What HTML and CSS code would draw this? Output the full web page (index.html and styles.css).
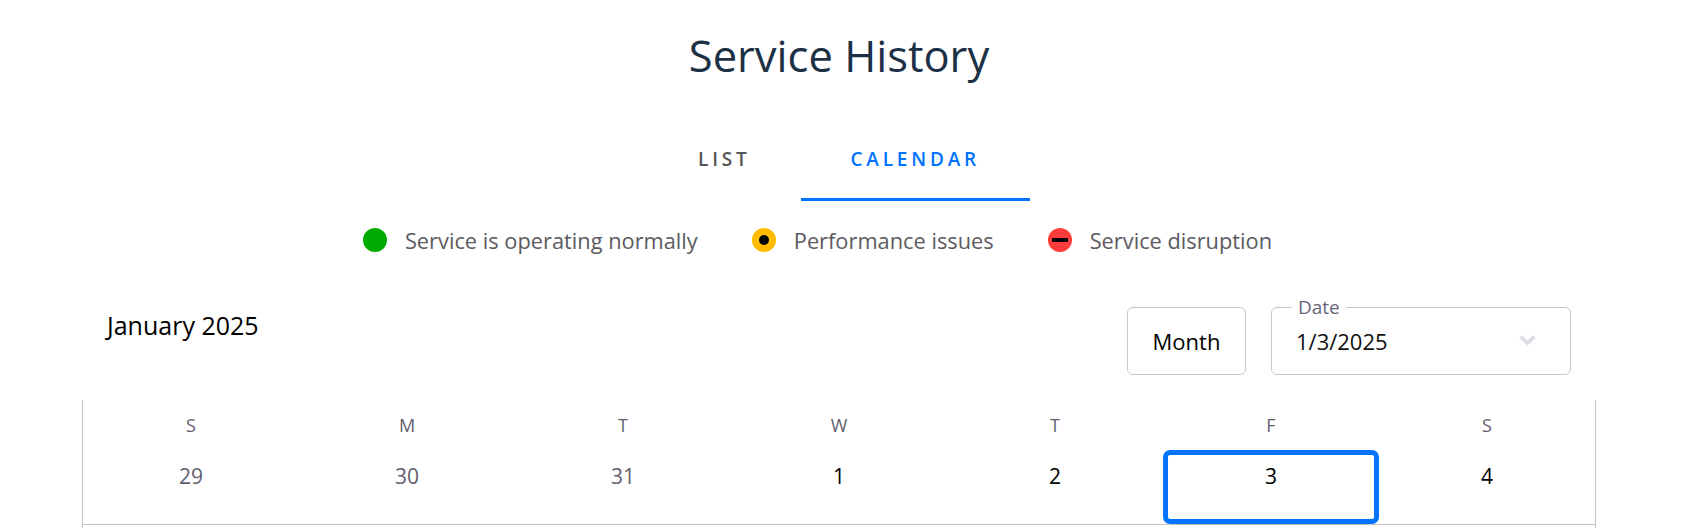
FILE: index.html
```html
<!DOCTYPE html>
<html lang="en">
<head>
    <meta charset="UTF-8">
    <meta name="viewport" content="width=device-width, initial-scale=1.0">
    <title>Service History</title>
    <link rel="stylesheet" href="styles.css">
</head>
<body>
    <div class="page">
        <h1 class="page-title">Service History</h1>

        <!-- Tabs -->
        <div class="tabs">
            <a href="#" class="tab">LIST</a>
            <a href="#" class="tab tab-active">CALENDAR</a>
        </div>

        <!-- Legend -->
        <div class="legend">
            <div class="legend-item">
                <span class="status status-ok"></span>
                <span>Service is operating normally</span>
            </div>
            <div class="legend-item">
                <span class="status status-warn"></span>
                <span>Performance issues</span>
            </div>
            <div class="legend-item">
                <span class="status status-down"></span>
                <span>Service disruption</span>
            </div>
        </div>

        <!-- Calendar toolbar -->
        <div class="toolbar">
            <div class="month-label">January 2025</div>
            <div class="controls">
                <button class="btn-view">Month</button>
                <fieldset class="date-field">
                    <legend>Date</legend>
                    <span>1/3/2025</span>
                    <svg class="chevron" width="17" height="11" viewBox="0 0 17 11">
                        <path d="M1.5 1.5 L8.5 8 L15.5 1.5" fill="none" stroke="#e1dde5" stroke-width="4"/>
                    </svg>
                </fieldset>
            </div>
        </div>

        <!-- Calendar -->
        <div class="calendar">
            <div class="weekday">S</div>
            <div class="weekday">M</div>
            <div class="weekday">T</div>
            <div class="weekday">W</div>
            <div class="weekday">T</div>
            <div class="weekday">F</div>
            <div class="weekday">S</div>
            <div class="day day-muted">29</div>
            <div class="day day-muted">30</div>
            <div class="day day-muted">31</div>
            <div class="day">1</div>
            <div class="day">2</div>
            <div class="day day-selected">3</div>
            <div class="day">4</div>
            <div class="week-rule"></div>
        </div>
    </div>
</body>
</html>
```

FILE: styles.css
```css
* {
    margin: 0;
    padding: 0;
    box-sizing: border-box;
    font-family: 'Open Sans', sans-serif;
}

body {
    background: #fff;
    height: 528px;
    overflow: hidden;
}

.page {
    padding: 0 90px 0 82px;
}

.page-title {
    font-size: 43.5px;
    font-weight: 400;
    line-height: 60px;
    margin-top: 26px;
    color: #1c3145;
    text-align: center;
}

.tabs {
    display: flex;
    justify-content: center;
    margin-top: 29px;
}

.tab {
    display: block;
    padding: 32px 50px 0;
    height: 86px;
    line-height: 24px;
    font-size: 19px;
    font-weight: 600;
    letter-spacing: 3.8px;
    color: #555;
    text-decoration: none;
    border-bottom: 3px solid transparent;
}

.tab-active {
    color: #0073ff;
    border-bottom-color: #0073ff;
}

.legend {
    display: flex;
    justify-content: center;
    gap: 54px;
    padding-right: 43px;
    margin-top: 25px;
}

.legend-item {
    display: flex;
    align-items: center;
    gap: 18px;
    font-size: 21.8px;
    line-height: 30px;
    color: #5c5a60;
}

.status {
    position: relative;
    display: block;
    width: 24px;
    height: 24px;
    margin-top: -2px;
    border-radius: 50%;
}

.status-ok {
    background: #00aa00;
}

.status-warn {
    background: #ffbb00;
}

.status-warn::after {
    content: "";
    position: absolute;
    left: 7px;
    top: 7px;
    width: 10px;
    height: 10px;
    border-radius: 50%;
    background: #000;
}

.status-down {
    background: #ff3b3b;
}

.status-down::after {
    content: "";
    position: absolute;
    left: 4px;
    top: 10px;
    width: 16px;
    height: 4px;
    background: #000;
}

.toolbar {
    display: flex;
    justify-content: space-between;
    align-items: flex-start;
    padding: 0 25px;
    margin-top: 42px;
}

.month-label {
    padding-top: 11px;
    font-size: 25px;
    line-height: 32px;
    color: #000;
}

.controls {
    display: flex;
    gap: 25px;
}

.btn-view {
    width: 119px;
    height: 68px;
    margin-top: 9px;
    background: #fff;
    border: 1px solid #c8c6cc;
    border-radius: 6px;
    font-size: 22px;
    color: #000;
}

.date-field {
    display: flex;
    align-items: center;
    justify-content: space-between;
    width: 300px;
    height: 77px;
    padding: 0 34px 9px 24px;
    border: 1px solid #c8c6cc;
    border-radius: 6px;
    font-size: 22px;
    color: #111;
}

.date-field legend {
    padding: 0 6px;
    margin-left: -4px;
    font-size: 19px;
    line-height: 18px;
    color: #696478;
}

.calendar {
    display: grid;
    grid-template-columns: repeat(7, 216px);
    grid-template-rows: 50px 74px 4px;
    margin-top: 25px;
    border-left: 1px solid #c4c4c4;
    border-right: 1px solid #c4c4c4;
}

.weekday {
    padding-top: 13px;
    text-align: center;
    font-size: 18px;
    line-height: 24px;
    color: #62606e;
}

.day {
    padding-top: 12px;
    text-align: center;
    font-size: 21px;
    line-height: 28px;
    color: #000;
}

.day-muted {
    color: #62606e;
}

.day-selected {
    padding-top: 7px;
    border: 5px solid #0073ff;
    border-radius: 7px;
}

.week-rule {
    grid-column: 1 / -1;
    border-top: 1px solid #c4c4c4;
}
```
